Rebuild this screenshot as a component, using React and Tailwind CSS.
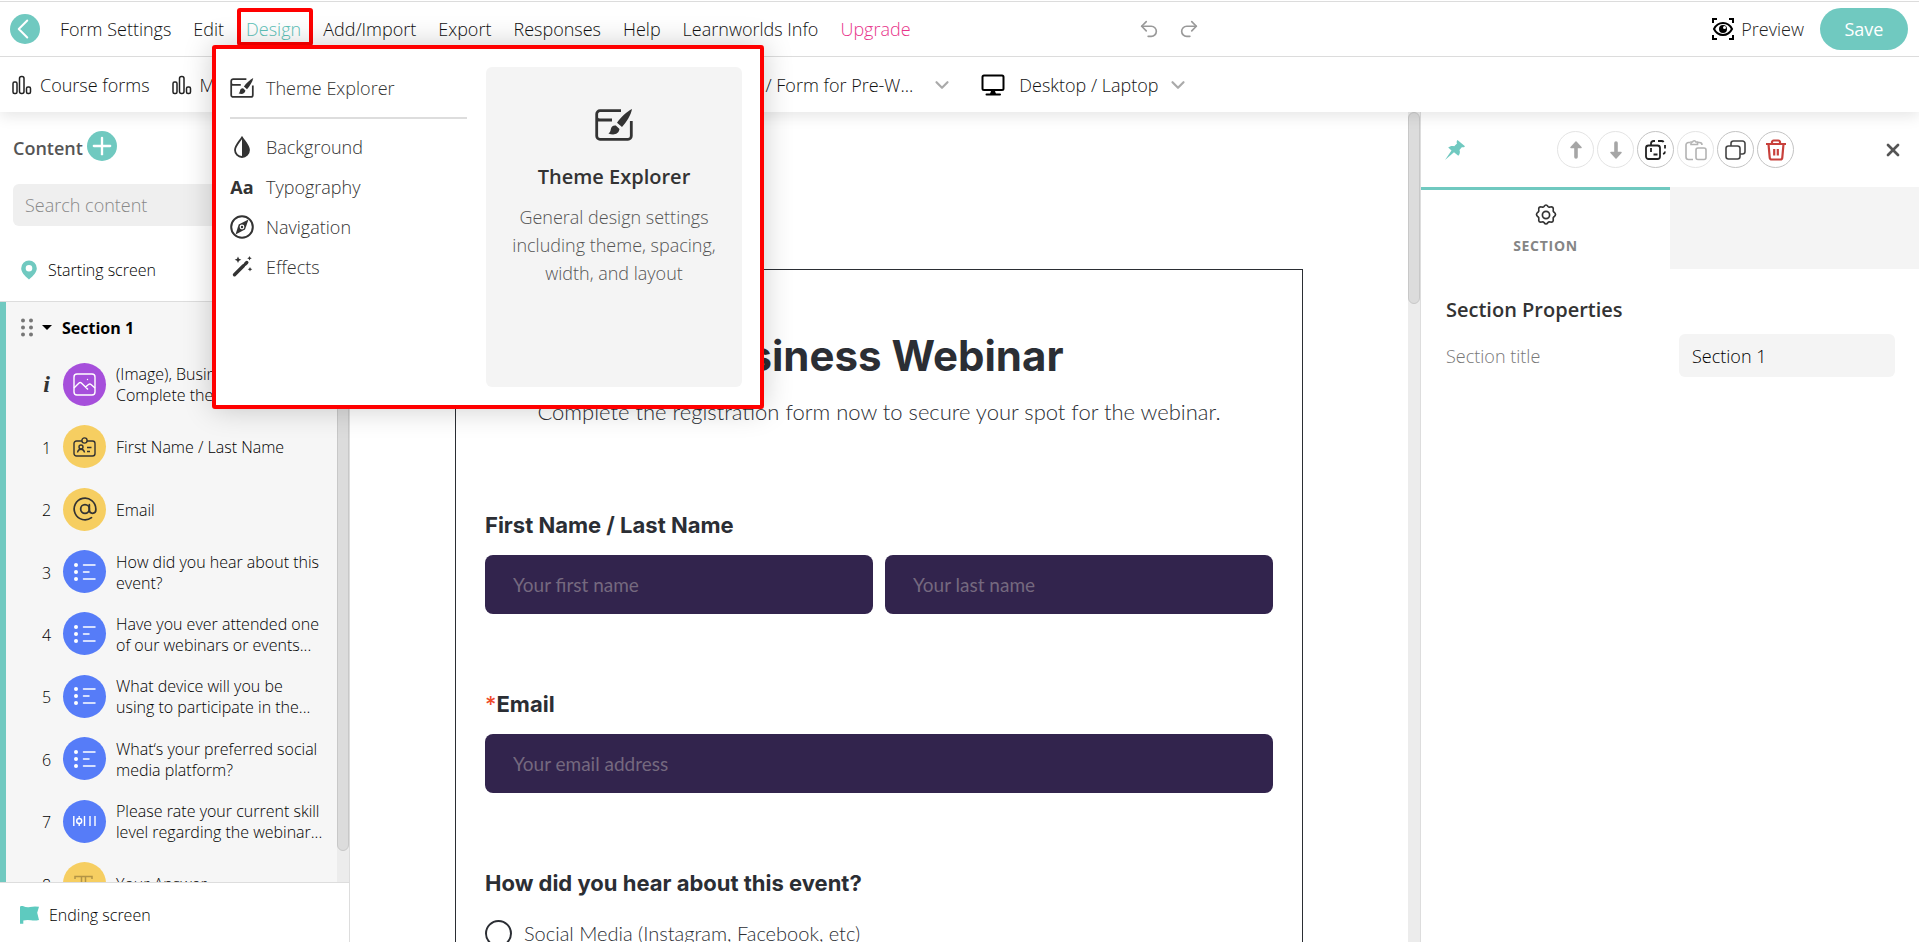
import { AtSign, ChevronDown, ChevronLeft, Plus, X, Undo2, Redo2 } from "lucide-react";

function ThemeIcon({ className }) {
  return (
    <svg className={className} viewBox="0 0 38 32" fill="none" stroke="currentColor" strokeWidth="2.800" aria-hidden="true">
      <path d="M26 1.700H5A3.300 3.300 0 0 0 1.700 5v22A3.300 3.300 0 0 0 5 30.300h28a3.300 3.300 0 0 0 3.300-3.300V12M1.700 8.500c0 1.800 1.300 2.500 3.300 2.500h12" />
      <path d="M37 0c-5 2.400-11.500 8.600-15 13.700l5 4.300C31.500 13 36 6 37 0zM20.800 16.500c-2.800-.4-4.600 1.200-5 3.800-.2 2-1 3.200-2.400 4.200 5 2 10.200 1.200 11.100-4.400z" fill="currentColor" stroke="none" />
    </svg>
  );
}

function DropIcon() {
  return (
    <svg className="h-[22px] w-[18px]" viewBox="0 0 18 22" aria-hidden="true">
      <path d="M9 1.500C6 6 2 10 2 14a7 7 0 0 0 14 0C16 10 12 6 9 1.500z" fill="none" stroke="currentColor" strokeWidth="1.800" />
      <path d="M9 1c3 5 7 9 7 13a7 7 0 0 1-7 7z" fill="currentColor" />
    </svg>
  );
}

function CompassIcon() {
  return (
    <svg className="size-6" viewBox="0 0 24 24" aria-hidden="true">
      <circle cx="12" cy="12" r="10.800" fill="none" stroke="currentColor" strokeWidth="2" />
      <path d="M18.500 4.500l-3.500 10L5.500 19.500l3.200-10z" fill="currentColor" />
      <circle cx="12" cy="12" r="2.400" fill="#fff" />
      <circle cx="12" cy="12" r="1.200" fill="currentColor" />
    </svg>
  );
}

function WandIcon() {
  return (
    <svg className="size-[22px]" viewBox="0 0 22 22" aria-hidden="true">
      <path d="M3.500 18.800L12.500 9.800M14.200 8.100l1.600-1.600" fill="none" stroke="currentColor" strokeWidth="3.400" strokeLinecap="round" />
      <path d="M7 .500l1 2.300 2.300 1-2.300 1-1 2.300-1-2.300-2.300-1 2.300-1zM18.500 0l.7 1.600 1.600.7-1.600.7-.7 1.600-.7-1.600-1.600-.7 1.600-.7zM19 11l.7 1.600 1.600.7-1.600.7-.7 1.600-.7-1.600-1.600-.7 1.600-.7z" fill="currentColor" />
    </svg>
  );
}

function BarsIcon() {
  return (
    <svg className="h-5 w-5" viewBox="0 0 20 20" fill="none" stroke="#222" strokeWidth="1.500" aria-hidden="true">
      <rect x="1" y="7" width="4" height="11.500" rx="1.500" />
      <rect x="7.500" y="1.500" width="4.500" height="17" rx="2" />
      <rect x="14.500" y="12" width="4" height="6.500" rx="1.500" />
    </svg>
  );
}

function MonitorIcon() {
  return (
    <svg className="h-[22px] w-6" viewBox="0 0 24 22" aria-hidden="true">
      <rect x="1.500" y="1.500" width="21" height="14.500" rx="1.500" fill="none" stroke="#000" strokeWidth="2" />
      <path d="M10 17h4l1 3h-6z" fill="#000" />
      <path d="M5.500 20.500h13.500" stroke="#000" strokeWidth="2" strokeLinecap="round" />
    </svg>
  );
}

function PreviewIcon() {
  return (
    <svg className="size-[22px]" viewBox="0 0 22 22" fill="none" stroke="#000" aria-hidden="true">
      <path d="M1 5V1h4M17 1h4v4M21 17v4h-4M5 21H1v-4" strokeWidth="2" />
      <path d="M2 11c2-4 5.500-6 9-6s7 2 9 6c-2 4-5.500 6-9 6s-7-2-9-6z" strokeWidth="2" />
      <circle cx="11" cy="11" r="4" fill="#000" stroke="none" />
      <circle cx="12.500" cy="9.500" r="1.500" fill="#fff" stroke="none" />
    </svg>
  );
}

function PinIcon() {
  return (
    <svg className="size-5" viewBox="0 0 20 20" aria-hidden="true">
      <path d="M12.500 0l7.500 6.200c-1 1.300-2 1.300-3.200 1l-2.300 2.800c.8 2 .5 4-1.200 5.800l-4.300-3.500L0 20l6.500-9.500-3.300-3c1.800-1.600 4-2 6-1.200L12 3.500c-.6-1.200-.4-2.400.5-3.500z" fill="#70c9c0" />
    </svg>
  );
}

function ArrowIcon({ down }) {
  return (
    <svg className={down ? "h-[18px] w-3 rotate-180" : "h-[18px] w-3"} viewBox="0 0 12 18" fill="none" stroke="#a6a6a6" aria-hidden="true">
      <path d="M6 16V4" strokeWidth="3.600" strokeLinecap="round" />
      <path d="M6 1L11 6.500H1z" fill="#a6a6a6" strokeWidth="1.500" strokeLinejoin="round" />
    </svg>
  );
}

function GroupCopyIcon() {
  return (
    <svg className="h-5 w-[21px]" viewBox="0 0 21 20" fill="none" stroke="#222" strokeWidth="1.800" aria-hidden="true">
      <rect x="1" y="5.500" width="14" height="13.500" rx="2.500" />
      <path d="M6 5V3.500C6 2 7 1 8.500 1H10M13 1h3.500q1.500 0 2.200 1M20 5v3.500M20 11.500q0 2-2 2.500M6 8v4M8.500 14.500h4" />
    </svg>
  );
}

function PasteIcon() {
  return (
    <svg className="h-[22px] w-[22px]" viewBox="0 0 22 22" fill="none" stroke="#b3b3b3" strokeWidth="1.600" aria-hidden="true">
      <path d="M8 20.500H3.500A2.500 2.500 0 0 1 1 18V6a2.500 2.500 0 0 1 2.500-2.500H5M13 3.500h1.500A2.500 2.500 0 0 1 17 6" />
      <path d="M6 5.500V3h1.500a1.800 1.800 0 0 1 3.400 0h1.600v2.500z" />
      <rect x="11" y="9" width="10" height="11.500" rx="2" />
    </svg>
  );
}

function DuplicateIcon() {
  return (
    <svg className="h-5 w-[21px]" viewBox="0 0 21 20" fill="none" stroke="#444" strokeWidth="1.600" aria-hidden="true">
      <rect x="1" y="6" width="14" height="13" rx="2.500" />
      <path d="M6 6V3.500A2.500 2.500 0 0 1 8.500 1h9A2.500 2.500 0 0 1 20 3.500v8a2.500 2.500 0 0 1-2.500 2.500H15" />
    </svg>
  );
}

function TrashIcon() {
  return (
    <svg className="h-[22px] w-5" viewBox="0 0 20 22" fill="none" stroke="#c8403b" strokeWidth="2.200" aria-hidden="true">
      <path d="M0 5h20M6 5V3.500A1.700 1.700 0 0 1 7.700 1.500h4.600A1.700 1.700 0 0 1 14 3.500V5M2.500 5l1.200 13.500a2 2 0 0 0 2 2h8.600a2 2 0 0 0 2-2L17.500 5M8.200 10v6.500M11.800 10v6.500" />
    </svg>
  );
}

function GearIcon() {
  return (
    <svg className="size-[22px]" viewBox="0 0 22 22" fill="none" stroke="#333" strokeWidth="1.700" strokeLinejoin="round" aria-hidden="true">
      <circle cx="11" cy="11" r="3.600" />
      <path d="M9 2.500q2-3 4 0q.8 1 2.200.5q3.600-.7 3 3-.3 1.400.8 2.200q3 2.300 0 4.600-1.100.8-.8 2.200q.6 3.700-3 3-1.400-.5-2.200.5-2 3-4 0-.8-1-2.200-.5-3.600.7-3-3 .3-1.400-.8-2.200-3-2.300 0-4.600 1.100-.8.800-2.200-.6-3.700 3-3Q8.200 3.500 9 2.500z" />
    </svg>
  );
}

function ImageIcon() {
  return (
    <svg className="size-[23px]" viewBox="0 0 23 23" fill="none" stroke="#fff" strokeWidth="1.400" aria-hidden="true">
      <rect x="1" y="1" width="21" height="21" rx="3" />
      <path d="M1 15l5-5q1.200-1 2.400 0l6.600 6.500M12.500 14l3-2.500q1.300-1 2.500 0l4 3.500" />
      <circle cx="14.500" cy="6.500" r=".7" fill="#fff" stroke="none" />
    </svg>
  );
}

function BadgeIcon() {
  return (
    <svg className="h-5 w-[23px]" viewBox="0 0 23 20" fill="none" stroke="#333" strokeWidth="1.400" aria-hidden="true">
      <path d="M9 4H3.500A2.500 2.500 0 0 0 1 6.500v10A2.500 2.500 0 0 0 3.500 19h16a2.500 2.500 0 0 0 2.500-2.500v-10A2.500 2.500 0 0 0 19.500 4H14" />
      <circle cx="11.500" cy="3.500" r="2.600" />
      <circle cx="8" cy="10" r="2" />
      <path d="M4.500 15.500c.3-2.200 1.500-3.300 3.500-3.300s3.200 1.100 3.500 3.300M14 10.500h4.500M14 14.500h3" />
    </svg>
  );
}

function ListIcon() {
  return (
    <svg className="h-[18px] w-[22px]" viewBox="0 0 22 18" stroke="#fff" strokeWidth="1.500" strokeLinecap="round" aria-hidden="true">
      <path d="M9.500 2H21M9.500 9H15M9.500 16H21" />
      <g fill="#fff" stroke="none">
        <circle cx="2" cy="2" r="2" />
        <circle cx="2" cy="9" r="2" />
        <circle cx="2" cy="16" r="2" />
      </g>
    </svg>
  );
}

function RatingIcon() {
  return (
    <svg className="h-3 w-[23px]" viewBox="0 0 23 12" fill="none" stroke="#fff" strokeWidth="1.400" aria-hidden="true">
      <path d="M.8 1v10M11.500 1v10M17 1v10M22 1v10M6.200 1v1.800M6.200 9v2" />
      <circle cx="6.200" cy="6" r="2.500" />
    </svg>
  );
}

function TextIcon() {
  return (
    <svg className="size-[22px]" viewBox="0 0 22 22" fill="none" stroke="#b39445" strokeWidth="1.500" aria-hidden="true">
      <path d="M1 6V3.500h17V6M7.500 3.500V20M11.500 3.500V20" />
    </svg>
  );
}

function PlacePin() {
  return (
    <svg className="h-5 w-4" viewBox="0 0 16 20" aria-hidden="true">
      <path d="M8 .500a7.800 7.800 0 0 1 7.800 7.800C15.800 12 12.500 16 8 19.500 3.500 16 .2 12 .2 8.300A7.800 7.800 0 0 1 8 .500zm0 4.500a3.300 3.300 0 1 0 0 6.600A3.300 3.300 0 0 0 8 5z" fill="#70c9c0" />
    </svg>
  );
}

function FlagIcon() {
  return (
    <svg className="h-[18px] w-[19px]" viewBox="0 0 19 18" aria-hidden="true">
      <path d="M1.300 0h1.500q4 1.800 7.200 1 4.500-1 9-.2l-1.800 6L19 14q-4 1-8 .3-4-.8-7.700.2v3.200H0V1.300Q0 0 1.300 0z" fill="#5ecabf" />
    </svg>
  );
}

const menuItems = ["Form Settings", "Edit", "Design", "Add/Import", "Export", "Responses", "Help", "Learnworlds Info", "Upgrade"];

const designItems = [
  { label: "Background", icon: <DropIcon /> },
  { label: "Typography", icon: <span className="font-['Open_Sans',sans-serif] text-lg font-bold">Aa</span> },
  { label: "Navigation", icon: <CompassIcon /> },
  { label: "Effects", icon: <WandIcon /> },
];

const blocks = [
  { n: "i", color: "bg-[#a64fdb]", icon: <ImageIcon />, text: "(Image), Business Webinar,\nComplete the registration..." },
  { n: "1", color: "bg-[#f6ce61]", icon: <BadgeIcon />, text: "First Name / Last Name" },
  { n: "2", color: "bg-[#f6ce61]", icon: <AtSign size={26} strokeWidth={1.6} color="#333" />, text: "Email" },
  { n: "3", color: "bg-[#567cf8]", icon: <ListIcon />, text: "How did you hear about this\nevent?" },
  { n: "4", color: "bg-[#567cf8]", icon: <ListIcon />, text: "Have you ever attended one\nof our webinars or events..." },
  { n: "5", color: "bg-[#567cf8]", icon: <ListIcon />, text: "What device will you be\nusing to participate in the..." },
  { n: "6", color: "bg-[#567cf8]", icon: <ListIcon />, text: "What‘s your preferred social\nmedia platform?" },
  { n: "7", color: "bg-[#567cf8]", icon: <RatingIcon />, text: "Please rate your current skill\nlevel regarding the webinar..." },
  { n: "8", color: "bg-[#f6ce61]", icon: <TextIcon />, text: "Your Answer" },
];

const tools = [
  { label: "Move up", icon: <ArrowIcon />, off: true },
  { label: "Move down", icon: <ArrowIcon down />, off: true },
  { label: "Copy", icon: <GroupCopyIcon /> },
  { label: "Paste", icon: <PasteIcon />, off: true },
  { label: "Duplicate", icon: <DuplicateIcon /> },
  { label: "Delete", icon: <TrashIcon /> },
];

function DesignMenu() {
  return (
    <div className="absolute top-[45px] left-[212px] z-30 flex h-[364px] w-[552px] justify-between rounded-[3px] border-4 border-[#f00] bg-white py-[18px] pr-[18px] pl-[14px] text-[#333] shadow-[0_0_30px_rgba(0,0,0,0.2)]">
      <div className="w-[237px]">
        <button className="flex h-[42px] items-center gap-3 text-left">
          <span className="flex w-6 justify-center"><ThemeIcon className="h-5 w-6" /></span>
          Theme Explorer
        </button>
        <hr className="my-2 border-t-2 border-[#ddd]" />
        {designItems.map((item) => (
          <button key={item.label} className="flex h-10 items-center gap-3 text-left">
            <span className="flex w-6 justify-center">{item.icon}</span>
            {item.label}
          </button>
        ))}
      </div>
      <div className="flex w-64 flex-col items-center rounded-md bg-[#f4f4f4] px-4 pt-[42px] text-center">
        <ThemeIcon className="h-8 w-[38px]" />
        <h2 className="mt-[22px] text-xl leading-7 font-semibold">Theme Explorer</h2>
        <p className="mt-3 leading-7 text-[#555]">General design settings including theme, spacing, width, and layout</p>
      </div>
    </div>
  );
}

function Header() {
  return (
    <header className="relative z-20 flex-none bg-white pt-px shadow-[0_4px_14px_rgba(0,0,0,0.1)]">
      <div className="flex h-14 items-center border-y border-[#dcdcdc] pr-[11px] pl-[10px]">
        <button aria-label="Back" className="flex size-[30px] items-center justify-center rounded-full bg-[#70c9c0] pr-1 text-white">
          <ChevronLeft className="flex-none" size={34} strokeWidth={1.4} />
        </button>
        <nav className="ml-5 flex w-[1060px] items-center gap-[22px] text-[#111]">
          {menuItems.map((label) =>
            label === "Design" ? (
              <a key={label} href="#design" className="relative text-[#5dc2b8]">
                <span className="absolute -top-[9px] -right-3 -left-[9px] h-[38px] rounded-[3px] border-4 border-[#f00]" />
                {label}
              </a>
            ) : (
              <a key={label} href="#menu" className={label === "Upgrade" ? "text-[#e8338a]" : ""}>{label}</a>
            )
          )}
        </nav>
        <div className="flex flex-1 items-center gap-[18px] pl-[18px] text-[#999]">
          <button aria-label="Undo"><Undo2 size={22} strokeWidth={1.8} /></button>
          <button aria-label="Redo"><Redo2 size={22} strokeWidth={1.8} /></button>
        </div>
        <button className="flex items-center gap-[7px] text-[#222]"><PreviewIcon />Preview</button>
        <button className="ml-4 h-[42px] w-[88px] rounded-full bg-[#70c9c0] font-normal text-white">Save</button>
      </div>
      <div className="flex h-[55px] items-center pl-3 text-[#111]">
        <button className="flex items-center gap-2"><BarsIcon />Course forms</button>
        <button className="ml-[22px] flex items-center gap-2"><BarsIcon />My forms</button>
        <div className="flex w-[678px] items-center justify-end">
          <button className="flex items-center gap-[18px]">Survey / Form for Pre-W...<ChevronDown size={22} strokeWidth={2.4} color="#aaa" /></button>
        </div>
        <button className="ml-7 flex items-center gap-[14px]"><MonitorIcon /><span className="flex items-center gap-2">Desktop / Laptop<ChevronDown size={22} strokeWidth={2.4} color="#aaa" /></span></button>
      </div>
      <DesignMenu />
    </header>
  );
}

function Sidebar() {
  return (
    <aside className="flex w-[350px] flex-none flex-col border-r border-[#ddd] bg-white text-black">
      <div className="flex items-center gap-1 pt-[19px] pl-[13px]">
        <h2 className="pt-1 font-semibold text-[#555]">Content</h2>
        <button aria-label="Add content" className="flex size-[30px] items-center justify-center rounded-full bg-[#70c9c0] text-white"><Plus className="flex-none" size={28} strokeWidth={2} /></button>
      </div>
      <div className="px-[13px] pt-[23px]">
        <input aria-label="Search content" placeholder="Search content" className="h-[42px] w-full rounded-md bg-[#efefef] px-3 placeholder:text-[#888]" />
      </div>
      <button className="mt-[19px] flex h-[57px] items-center gap-[11px] border-b border-[#ddd] pb-[6px] pl-[21px] text-base"><PlacePin />Starting screen</button>
      <div className="flex min-h-0 flex-1 overflow-hidden border-l-6 border-[#70c9c0] bg-[#f6f6f6] text-base">
        <div className="flex-1">
          <div className="flex h-[51px] items-center pl-[15px]">
            <svg className="h-[19px] w-3" viewBox="0 0 12 19" fill="#777" aria-hidden="true">
              <circle cx="2" cy="2.500" r="2" /><circle cx="10" cy="2.500" r="2" />
              <circle cx="2" cy="9.500" r="2" /><circle cx="10" cy="9.500" r="2" />
              <circle cx="2" cy="16.500" r="2" /><circle cx="10" cy="16.500" r="2" />
            </svg>
            <svg className="ml-[9px] h-[5px] w-[10px]" viewBox="0 0 10 5" aria-hidden="true"><path d="M0 0h10L5 5z" /></svg>
            <h3 className="ml-[10px] text-base font-bold">Section 1</h3>
          </div>
          <ul className="grid h-[562px] grid-rows-9">
            {blocks.map((b) => (
              <li key={b.n} className="flex items-center">
                <span className={b.n === "i" ? "w-[57px] pl-6 text-center font-['Liberation_Serif',serif] text-2xl font-bold text-[#333] italic" : "w-[57px] pt-[2px] pl-6 text-center"}>{b.n}</span>
                <span className={"flex size-[43px] flex-none items-center justify-center rounded-full " + b.color}>{b.icon}</span>
                <span className="ml-[10px] pt-[2px] leading-[21px] whitespace-pre">{b.text}</span>
              </li>
            ))}
          </ul>
        </div>
        <div className="w-3 flex-none bg-[#ececec]">
          <div className="h-[549px] rounded-full border border-[#c8c8c8] bg-[#dcdcdc]" />
        </div>
      </div>
      <button className="flex h-[60px] flex-none items-center gap-[10px] border-t border-[#ddd] pt-1 pl-5 text-base"><FlagIcon />Ending screen</button>
    </aside>
  );
}

const fieldClass = "h-[59px] w-full min-w-0 rounded-lg bg-[#32244d] px-7 font-['Lato',sans-serif] text-[19px] font-normal placeholder:text-[#75697f]";

function Canvas() {
  return (
    <main className="flex min-w-0 flex-1 overflow-hidden bg-white">
      <div className="flex-1 px-[105px] pt-[157px]">
        <form className="border border-[#2b2e34] px-[29px] font-['Inter',sans-serif] text-[#2b2e34]">
          <h1 className="mt-[56px] text-center text-[42px] leading-[60px] font-bold">Business Webinar</h1>
          <p className="mt-[10px] text-center font-['Lato',sans-serif] text-[22px] leading-8">Complete the registration form now to secure your spot for the webinar.</p>
          <fieldset className="mt-[81px]">
            <legend className="text-[22px] leading-8 font-bold">First Name / Last Name</legend>
            <div className="mt-[14px] flex gap-3">
              <input aria-label="First name" placeholder="Your first name" className={fieldClass} />
              <input aria-label="Last name" placeholder="Your last name" className={fieldClass} />
            </div>
          </fieldset>
          <div className="mt-[74px]">
            <label htmlFor="email" className="block text-[22px] leading-8 font-bold"><span className="font-medium text-[#f04a2a]">*</span>Email</label>
            <input id="email" placeholder="Your email address" className={"mt-[14px] " + fieldClass} />
          </div>
          <fieldset className="mt-[74px]">
            <legend className="text-[22px] leading-8 font-bold">How did you hear about this event?</legend>
            <label className="mt-5 flex items-center gap-3 font-['Lato',sans-serif] text-[20px] leading-7">
              <input type="radio" name="source" className="size-[27px] appearance-none rounded-full border-2 border-[#2b2e34]" />
              Social Media (Instagram, Facebook, etc)
            </label>
          </fieldset>
        </form>
      </div>
      <div className="w-3 flex-none bg-[#ececec]">
        <div className="h-48 rounded-full border border-[#c8c8c8] bg-[#dcdcdc]" />
      </div>
    </main>
  );
}

function Inspector() {
  return (
    <aside className="w-[499px] flex-none border-l border-[#ddd] bg-white">
      <div className="flex h-[75px] items-center pr-4 pl-6">
        <button aria-label="Pin panel"><PinIcon /></button>
        <div className="ml-[92px] flex flex-1 gap-[3px]">
          {tools.map((t) => (
            <button key={t.label} aria-label={t.label} className={"flex size-[37px] items-center justify-center rounded-full border " + (t.off ? "border-[#e4e4e4]" : "border-[#c4c4c4]")}>{t.icon}</button>
          ))}
        </div>
        <button aria-label="Close"><X size={20} strokeWidth={3.2} color="#555" /></button>
      </div>
      <div className="flex h-[82px]">
        <button className="flex flex-1 flex-col items-center border-t-3 border-[#70c9c0] pt-[14px] text-sm font-bold tracking-wider text-[#858585]">
          <GearIcon />
          <span className="mt-[10px]">SECTION</span>
        </button>
        <div className="flex-1 bg-[#f4f4f4]" />
      </div>
      <div className="pt-[27px] pr-6 pl-[25px]">
        <h2 className="text-xl leading-7 font-semibold text-[#333]">Section Properties</h2>
        <div className="mt-[10px] flex items-center justify-between">
          <label htmlFor="section-title" className="text-[#777]">Section title</label>
          <input id="section-title" defaultValue="Section 1" className="h-[43px] w-[216px] rounded-md bg-[#f4f4f4] px-[13px] text-black" />
        </div>
      </div>
    </aside>
  );
}

export default function App() {
  return (
    <div className="flex h-screen flex-col overflow-hidden bg-white font-['Open_Sans','Noto_Sans',sans-serif] text-lg leading-6 font-light">
      <Header />
      <div className="flex min-h-0 flex-1">
        <Sidebar />
        <Canvas />
        <Inspector />
      </div>
    </div>
  );
}
